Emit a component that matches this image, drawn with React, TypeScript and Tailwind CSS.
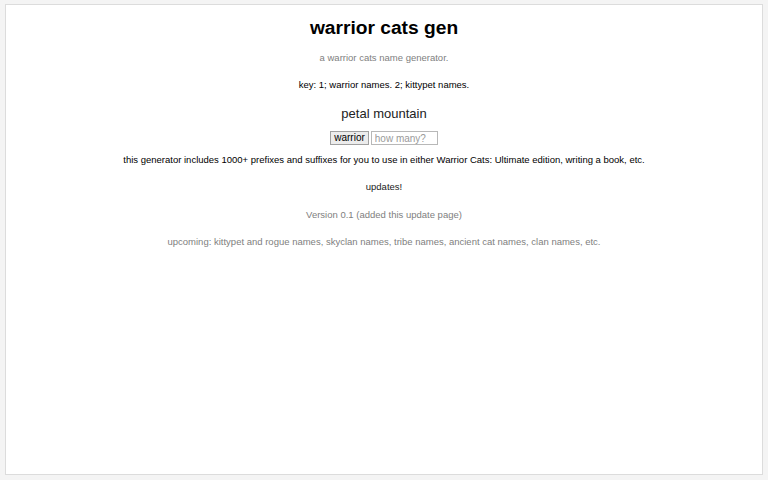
import { useState } from "react";

export default function App() {
  const [count, setCount] = useState("");

  return (
    <div className="min-h-screen bg-[#f4f4f4] p-[4px_5px_5px_5px] font-['Liberation_Sans',Arial,sans-serif]">
      <div className="flex h-[471px] flex-col items-center border border-[#dcdcdc] bg-white text-center text-black">
        <h1 className="mt-[11px] text-[19.2px] font-bold leading-[24px]">warrior cats gen</h1>
        <p className="mt-[12px] text-[9.5px] leading-[12px] text-[#808080]">a warrior cats name generator.</p>
        <p className="mt-[15px] text-[9.5px] leading-[12px]">key: 1; warrior names. 2; kittypet names.</p>
        <p className="mt-[15px] text-[13px] leading-[16px] text-[#222]">petal mountain</p>
        <div className="mt-[9px] flex items-center gap-[2px]">
          <button className="h-[14px] border border-[#a0a0a0] bg-[#ececec] px-[3px] text-[10px] leading-[12px]">
            warrior
          </button>
          <input
            value={count}
            onChange={(e) => setCount(e.target.value)}
            placeholder="how many?"
            className="h-[14px] w-[67px] border border-[#b8b8b8] px-[3px] text-[10px] leading-[12px] placeholder:text-[#9a9a9a]"
          />
        </div>
        <p className="mt-[9px] text-[9.5px] leading-[12px]">
          this generator includes 1000+ prefixes and suffixes for you to use in either Warrior Cats: Ultimate edition, writing a book, etc.
        </p>
        <p className="mt-[15px] text-[9.5px] leading-[12px] text-[#222]">updates!</p>
        <p className="mt-[16px] text-[9.5px] leading-[12px] text-[#808080]">Version 0.1 (added this update page)</p>
        <p className="mt-[15px] text-[9.5px] leading-[12px] text-[#808080]">
          upcoming: kittypet and rogue names, skyclan names, tribe names, ancient cat names, clan names, etc.
        </p>
      </div>
    </div>
  );
}
